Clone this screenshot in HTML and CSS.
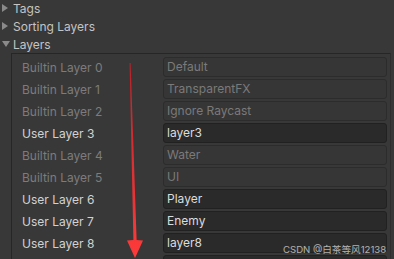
FILE: index.html
```html
<!DOCTYPE html>
<html>
  <head>
    <meta charset="utf-8" />
    <title>Tags &amp; Layers</title>
    <link rel="stylesheet" href="styles.css">
  </head>
  <body>
    <div class="foldout"><span class="arrow right"></span>Tags</div>
    <div class="foldout"><span class="arrow right"></span>Sorting Layers</div>
    <div class="foldout"><span class="arrow down"></span>Layers</div>

    <div class="layers">
      <div class="row off"><span class="label">Builtin Layer 0</span><span class="field">Default</span></div>
      <div class="row off"><span class="label">Builtin Layer 1</span><span class="field">TransparentFX</span></div>
      <div class="row off"><span class="label">Builtin Layer 2</span><span class="field">Ignore Raycast</span></div>
      <div class="row"><span class="label">User Layer 3</span><span class="field">layer3</span></div>
      <div class="row off"><span class="label">Builtin Layer 4</span><span class="field">Water</span></div>
      <div class="row off"><span class="label">Builtin Layer 5</span><span class="field">UI</span></div>
      <div class="row"><span class="label">User Layer 6</span><span class="field">Player</span></div>
      <div class="row"><span class="label">User Layer 7</span><span class="field">Enemy</span></div>
      <div class="row"><span class="label">User Layer 8</span><span class="field">layer8</span></div>
      <div class="row"><span class="label"></span><span class="field"></span></div>
    </div>

    <!-- annotation drawn over the screenshot -->
    <svg class="annot" width="394" height="259" viewBox="0 0 394 259">
      <defs>
        <linearGradient id="red" x1="0" y1="0" x2="0" y2="1">
          <stop offset="0" stop-color="#b8242a" />
          <stop offset="1" stop-color="#ff3a3a" />
        </linearGradient>
      </defs>
      <polygon fill="url(#red)" points="129.6,63 130.6,63 136.6,240 143,240.5 135,258 127,240.5 133.4,240" />
    </svg>
    <div class="mark">CSDN @白茶等风12138</div>
  </body>
</html>
```

FILE: styles.css
```css
body {
  margin: 0;
  height: 259px;
  overflow: hidden;
  position: relative;
  background: #383838;
  color: #c4c4c4;
  font-family: Inter, "Noto Sans", sans-serif;
  font-size: 12px;
}

/* foldout headers */
.foldout {
  display: flex;
  align-items: center;
  height: 18px;
  padding-left: 2px;
}

.foldout:first-child {
  margin-top: -1px;
}

.arrow {
  width: 0;
  height: 0;
  margin-right: 4px;
  border-style: solid;
}

.arrow.right {
  border-width: 4px 0 4px 6px;
  border-color: transparent transparent transparent #8a8a8a;
  margin-right: 5px;
}

.arrow.down {
  border-width: 6px 4px 0 4px;
  border-color: #8a8a8a transparent transparent transparent;
  margin-right: 3px;
}

/* layer list */
.layers {
  margin: 0 3px 0 11px;
  padding: 3px 3px 0 10px;
  border-top: 1px solid #262626;
  border-left: 1px solid #262626;
  border-right: 1px solid #2e2e2e;
  display: flex;
  flex-direction: column;
  gap: 2px;
}

.row {
  display: grid;
  grid-template-columns: 141px 1fr;
  align-items: center;
  height: 20px;
}

.label {
  color: #d2d2d2;
}

.field {
  height: 18px;
  line-height: 18px;
  padding-left: 3px;
  border: 1px solid #212121;
  border-radius: 3px;
  background: #2a2a2a;
  color: #dcdcdc;
}

.row.off .label {
  color: #7c7c7c;
}

.row.off .field {
  background: #363636;
  border-color: #2c2c2c;
  color: #7a7a7a;
}

.annot {
  position: absolute;
  left: 0;
  top: 0;
}

.mark {
  position: absolute;
  left: 283px;
  top: 242px;
  font-size: 9.6px;
  color: rgba(225, 225, 225, 0.75);
  font-family: Inter, "Noto Sans CJK SC", sans-serif;
  white-space: nowrap;
}
```
